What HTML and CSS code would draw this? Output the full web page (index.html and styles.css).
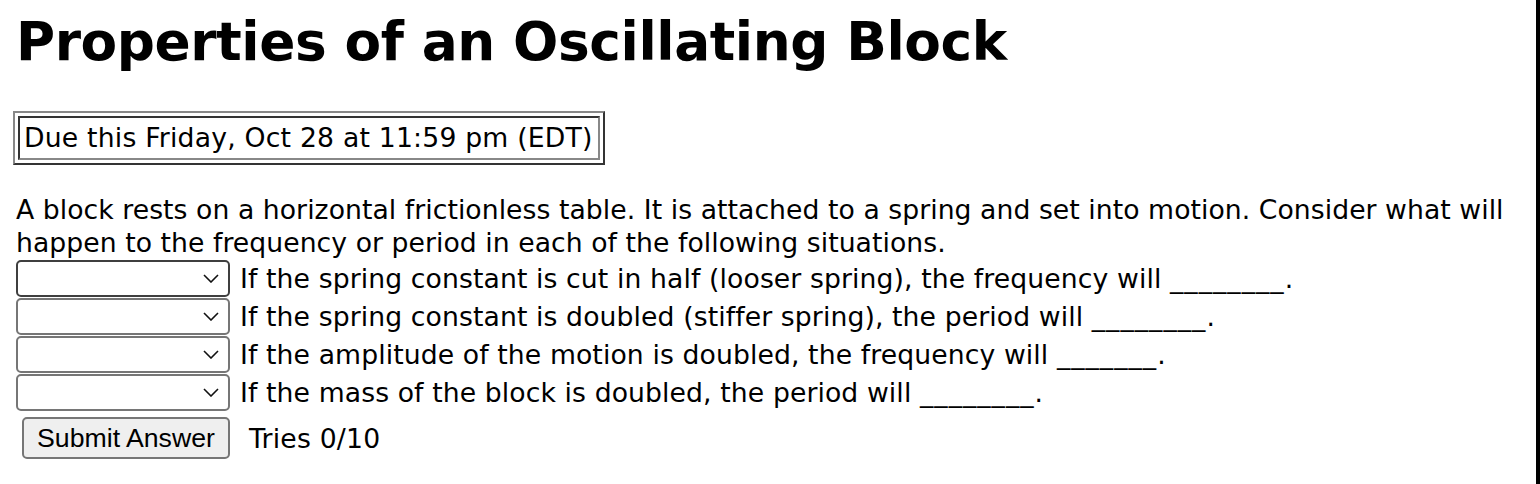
FILE: index.html
```html
<!DOCTYPE html>
<html lang="en">
<head>
<meta charset="utf-8">
<title>Properties of an Oscillating Block</title>
<link rel="stylesheet" href="styles.css">
</head>
<body>
<div class="page">
  <main class="content">
    <h1 class="title">Properties of an Oscillating Block</h1>
    <table class="due">
      <tr><td class="due-cell">Due this Friday, Oct 28 at 11:59 pm (EDT)</td></tr>
    </table>
    <p class="intro">A block rests on a horizontal frictionless table. It is attached to a spring and set into motion. Consider what will happen to the frequency or period in each of the following situations.</p>
    <div class="rows">
      <div class="row">
        <span class="select-wrap"><select class="answer answer-focus"><option></option><option>increase</option><option>decrease</option><option>stay the same</option></select><svg class="chev" viewBox="0 0 16 9" width="16" height="9"><path d="M1 1 L8 8 L15 1" fill="none" stroke="#111" stroke-width="1.6"/></svg></span>
        <span class="label">If the spring constant is cut in half (looser spring), the frequency will <span class="blank">________</span>.</span>
      </div>
      <div class="row">
        <span class="select-wrap"><select class="answer"><option></option><option>increase</option><option>decrease</option><option>stay the same</option></select><svg class="chev" viewBox="0 0 16 9" width="16" height="9"><path d="M1 1 L8 8 L15 1" fill="none" stroke="#111" stroke-width="1.6"/></svg></span>
        <span class="label">If the spring constant is doubled (stiffer spring), the period will <span class="blank">________</span>.</span>
      </div>
      <div class="row">
        <span class="select-wrap"><select class="answer"><option></option><option>increase</option><option>decrease</option><option>stay the same</option></select><svg class="chev" viewBox="0 0 16 9" width="16" height="9"><path d="M1 1 L8 8 L15 1" fill="none" stroke="#111" stroke-width="1.6"/></svg></span>
        <span class="label">If the amplitude of the motion is doubled, the frequency will <span class="blank">_______</span>.</span>
      </div>
      <div class="row">
        <span class="select-wrap"><select class="answer"><option></option><option>increase</option><option>decrease</option><option>stay the same</option></select><svg class="chev" viewBox="0 0 16 9" width="16" height="9"><path d="M1 1 L8 8 L15 1" fill="none" stroke="#111" stroke-width="1.6"/></svg></span>
        <span class="label">If the mass of the block is doubled, the period will <span class="blank">________</span>.</span>
      </div>
    </div>
    <div class="submit-row">
      <button class="submit" type="button">Submit Answer</button>
      <span class="tries">Tries 0/10</span>
    </div>
  </main>
  <div class="edge"></div>
</div>
</body>
</html>
```

FILE: styles.css
```css
html, body {
  margin: 0;
  padding: 0;
  background: #ffffff;
}

.page {
  display: flex;
  width: 1540px;
  height: 484px;
  overflow: hidden;
}

.content {
  flex: 1;
  padding: 0 8px 0 16px;
  font-family: "DejaVu Sans", Verdana, sans-serif;
  font-size: 26.67px;
  line-height: 32.4px;
  color: #000;
}

.edge {
  width: 4px;
  background: #000;
  flex: none;
}

.title {
  margin: 10px 0 0 0;
  font-size: 53.33px;
  line-height: 64.8px;
  font-weight: bold;
  letter-spacing: -0.4px;
  white-space: nowrap;
}

.due {
  width: 592px;
  margin: 36px 0 0 -3px;
  border: 2px outset #888;
  border-spacing: 3px;
  border-collapse: separate;
}

.due-cell {
  border: 2px inset #888;
  padding: 4px 4px;
  font-size: 26.67px;
  line-height: 32.4px;
  letter-spacing: 0.2px;
  white-space: nowrap;
}

.intro {
  margin: 29px 0 0 0;
  letter-spacing: 0.05px;
}

.rows {
  margin-top: 0;
}

.row {
  display: flex;
  align-items: center;
  height: 38px;
}

.select-wrap {
  position: relative;
  display: block;
  width: 214px;
  height: 37px;
  flex: none;
}

.answer {
  appearance: none;
  -webkit-appearance: none;
  display: block;
  width: 214px;
  height: 37px;
  margin: 0;
  border: 2px solid #767676;
  border-radius: 5px;
  background: #fff;
  box-sizing: border-box;
  font-family: "DejaVu Sans", Verdana, sans-serif;
  font-size: 24px;
}

.answer-focus {
  border-color: #3f3f3f;
}

.chev {
  position: absolute;
  right: 11px;
  top: 14px;
}

.label {
  margin-left: 10px;
  padding-top: 2px;
  letter-spacing: 0.1px;
  white-space: nowrap;
}

.blank {
  letter-spacing: 1px;
}

.submit-row {
  display: flex;
  align-items: center;
  margin-top: 6px;
}

.submit {
  margin: 0 0 0 6px;
  width: 208px;
  height: 42px;
  padding: 0;
  border: 2px solid #767676;
  border-radius: 5px;
  background: #efefef;
  font-family: "Liberation Sans", Arial, sans-serif;
  font-size: 26.67px;
  color: #000;
}

.tries {
  margin-left: 19px;
  padding-top: 2px;
  letter-spacing: 0.2px;
}
```
